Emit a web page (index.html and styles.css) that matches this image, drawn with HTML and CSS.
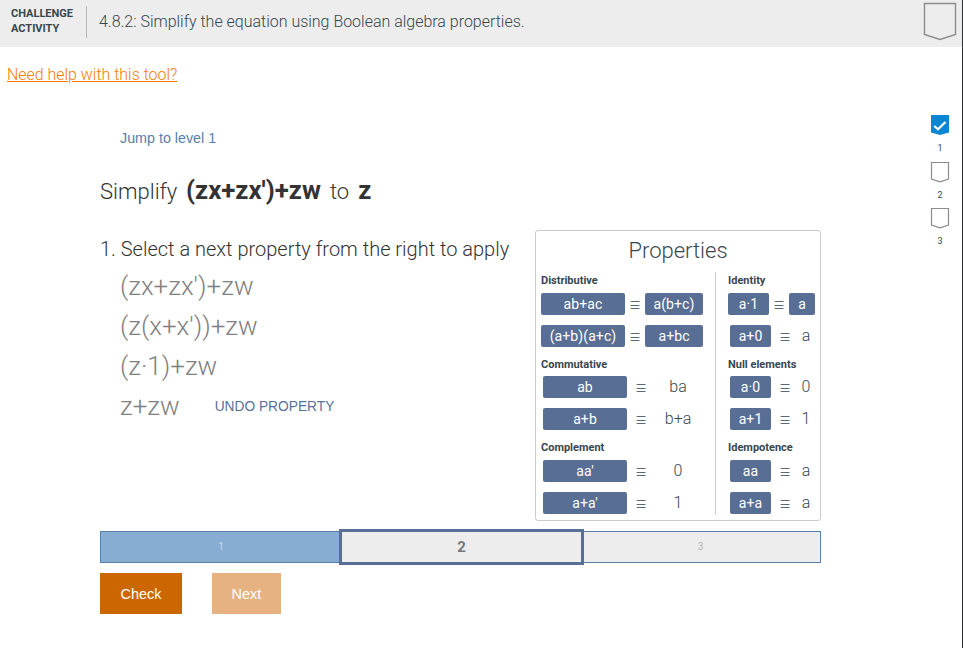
FILE: index.html
```html
<!DOCTYPE html>
<html lang="en">
<head>
    <meta charset="UTF-8">
    <meta name="viewport" content="width=device-width, initial-scale=1.0">
    <title>4.8.2: Simplify the equation using Boolean algebra properties</title>
    <link rel="stylesheet" href="styles.css">
</head>
<body>
    <div class="header">
        <div class="activity-type">CHALLENGE<br>ACTIVITY</div>
        <div class="activity-title">4.8.2: Simplify the equation using Boolean algebra properties.</div>
        <svg class="header-chevron" width="34" height="39" viewBox="0 0 34 39">
            <path d="M1.5 1.5H32.5V32.5L17 37.5L1.5 32.5Z" fill="none" stroke="#8c8c8c" stroke-width="1.4"/>
        </svg>
    </div>

    <div class="content">
        <div class="tool">
            <a href="#" class="help-link">Need help with this tool?</a>
            <div class="main">
                <button class="jump-button">Jump to level 1</button>
                <div class="prompt">
                    <span class="prompt-verb">Simplify</span>
                    <span class="prompt-expr">(zx+zx')+zw</span>
                    <span class="prompt-to">to</span>
                    <span class="prompt-expr">z</span>
                </div>

                <div class="work">
                    <div class="steps">
                        <div class="instruction">1. Select a next property from the right to apply</div>
                        <div class="step">(zx+zx')+zw</div>
                        <div class="step">(z(x+x'))+zw</div>
                        <div class="step">(z·1)+zw</div>
                        <div class="step">z+zw <button class="undo-button">UNDO PROPERTY</button></div>
                    </div>

                    <div class="properties">
                        <h2>Properties</h2>
                        <div class="columns">
                            <div class="column left">
                                <div class="group">
                                    <h3>Distributive</h3>
                                    <div class="row two-way"><button>ab+ac</button><i>≡</i><button>a(b+c)</button></div>
                                    <div class="row two-way"><button>(a+b)(a+c)</button><i>≡</i><button>a+bc</button></div>
                                </div>
                                <div class="group">
                                    <h3>Commutative</h3>
                                    <div class="row"><button>ab</button><i>≡</i><span>ba</span></div>
                                    <div class="row"><button>a+b</button><i>≡</i><span>b+a</span></div>
                                </div>
                                <div class="group">
                                    <h3>Complement</h3>
                                    <div class="row"><button>aa'</button><i>≡</i><span>0</span></div>
                                    <div class="row"><button>a+a'</button><i>≡</i><span>1</span></div>
                                </div>
                            </div>
                            <div class="column right">
                                <div class="group">
                                    <h3>Identity</h3>
                                    <div class="row two-way"><button>a·1</button><i>≡</i><button>a</button></div>
                                    <div class="row"><button>a+0</button><i>≡</i><span>a</span></div>
                                </div>
                                <div class="group">
                                    <h3>Null elements</h3>
                                    <div class="row"><button>a·0</button><i>≡</i><span>0</span></div>
                                    <div class="row"><button>a+1</button><i>≡</i><span>1</span></div>
                                </div>
                                <div class="group">
                                    <h3>Idempotence</h3>
                                    <div class="row"><button>aa</button><i>≡</i><span>a</span></div>
                                    <div class="row"><button>a+a</button><i>≡</i><span>a</span></div>
                                </div>
                            </div>
                        </div>
                    </div>
                </div>

                <div class="progress">
                    <div class="level done">1</div>
                    <div class="level current">2</div>
                    <div class="level">3</div>
                </div>
                <div class="actions">
                    <button class="check-button">Check</button>
                    <button class="next-button" disabled>Next</button>
                </div>
            </div>
        </div>

        <div class="chevrons">
            <div class="chevron">
                <svg width="20" height="22" viewBox="0 0 20 22">
                    <path d="M1 1H19V18.5L10 21L1 18.5Z" fill="#0b86d2"/>
                    <path d="M4.2 12L8 15.3L15.5 8" fill="none" stroke="#fff" stroke-width="2.2"/>
                </svg>
                <span>1</span>
            </div>
            <div class="chevron">
                <svg width="20" height="22" viewBox="0 0 20 22">
                    <path d="M1.5 1.5H18.5V18L10 20.8L1.5 18Z" fill="#fff" stroke="#8c8c8c" stroke-width="1.2"/>
                </svg>
                <span>2</span>
            </div>
            <div class="chevron">
                <svg width="20" height="22" viewBox="0 0 20 22">
                    <path d="M1.5 1.5H18.5V18L10 20.8L1.5 18Z" fill="#fff" stroke="#8c8c8c" stroke-width="1.2"/>
                </svg>
                <span>3</span>
            </div>
        </div>
    </div>
</body>
</html>
```
FILE: styles.css
```css
* {
    box-sizing: border-box;
}
body {
    margin: 0;
    height: 648px;
    overflow: hidden;
    background: #fff;
    border-right: 1px solid #2b2d30;
    font-family: Roboto, "Liberation Sans", sans-serif;
    font-weight: 300;
    color: #37474f;
}
button {
    border: none;
    padding: 0;
    font-family: inherit;
    cursor: pointer;
}
.header {
    display: flex;
    height: 47px;
    background: #ededed;
}
.activity-type {
    width: 86px;
    padding: 6px 0 0 11px;
    font-size: 11px;
    font-weight: 700;
    line-height: 15px;
}
.activity-title {
    flex: 1;
    height: 32px;
    margin-top: 6px;
    padding-left: 12px;
    border-left: 1px solid #b5b5b5;
    font-size: 15.97px;
    line-height: 32px;
}
.header-chevron {
    margin: 2px 5px 0 0;
}
.content {
    display: flex;
    justify-content: space-between;
}
.help-link {
    display: block;
    width: max-content;
    margin: 18px 0 0 7px;
    font-size: 15.95px;
    line-height: 20px;
    color: #f57c00;
}
.main {
    width: 721px;
    margin-left: 100px;
}
.jump-button {
    display: block;
    margin: 43px 0 0 20px;
    background: none;
    font-family: "Liberation Sans", Arial, sans-serif;
    font-size: 14.3px;
    line-height: 20px;
    color: #5780ab;
}
.prompt {
    display: flex;
    align-items: baseline;
    margin-top: 25px;
    font-size: 22px;
    line-height: 35px;
    color: #333;
}
.prompt-verb {
    width: 86px;
}
.prompt-expr {
    font-size: 25.8px;
    font-weight: 700;
}
.prompt-to {
    margin: 0 9px;
}
.work {
    display: flex;
    justify-content: space-between;
    margin-top: 21px;
}
.instruction {
    height: 36px;
    font-size: 20px;
    line-height: 39px;
    color: #333;
}
.step {
    display: flex;
    align-items: center;
    height: 40px;
    padding-left: 20px;
    font-size: 26px;
    color: #808080;
}
.undo-button {
    margin-left: 35px;
    background: none;
    font-family: "Liberation Sans", Arial, sans-serif;
    font-size: 13.75px;
    color: #58709a;
}
.properties {
    width: 286px;
    height: 291px;
    border: 1px solid #ccc;
    border-radius: 3px;
}
.properties h2 {
    height: 41px;
    margin: 0;
    font-size: 22px;
    font-weight: 300;
    line-height: 40px;
    text-align: center;
}
.columns {
    display: flex;
    height: 243px;
}
.column.left {
    width: 180px;
    padding-left: 5px;
    border-right: 1px solid #ccc;
}
.column.right {
    padding-left: 12px;
}
.group {
    height: 83.5px;
}
.group h3 {
    height: 20.5px;
    margin: 0;
    font-size: 11px;
    font-weight: 700;
    line-height: 18px;
}
.row {
    display: flex;
    height: 22px;
    margin: 0 0 10px 2px;
    font-size: 16px;
    line-height: 22px;
    text-align: center;
}
.row.two-way {
    margin-left: 0;
}
.row button {
    width: 84px;
    background: #586e94;
    border-radius: 2px;
    font-size: 14px;
    line-height: 22px;
    letter-spacing: 0.1px;
    color: #fff;
}
.row i {
    width: 28px;
    font-family: "Noto Sans CJK SC", sans-serif;
    font-size: 12px;
    font-style: normal;
    line-height: 21px;
    transform: scaleY(1.3);
}
.row span {
    width: 46px;
}
.two-way i {
    width: 20px;
}
.two-way button:last-child {
    width: 58px;
}
.right .row button {
    width: 41px;
}
.right .row span {
    width: 14px;
}
.right .two-way button:last-child {
    width: 26px;
}
.progress {
    display: flex;
    align-items: center;
    height: 36px;
    margin-top: 8px;
}
.level {
    width: 239px;
    height: 32px;
    background: #ededed;
    border: 1px solid #5780ab;
    font-size: 10px;
    font-weight: 400;
    line-height: 30px;
    text-align: center;
    color: #b3b3b3;
}
.level.done {
    background: #87add3;
    border-right: none;
    padding-left: 2px;
    color: #c9dcee;
}
.level.current {
    width: 245px;
    height: 36px;
    border: 3px solid #586e94;
    font-size: 15px;
    font-weight: 700;
    line-height: 30px;
    color: #777;
}
.level:last-child {
    width: 237px;
    padding-right: 3px;
    border-left: none;
}
.actions {
    display: flex;
    gap: 30px;
    margin-top: 8px;
}
.actions button {
    width: 82px;
    height: 41px;
    background: #cc6600;
    font-family: "Liberation Sans", Arial, sans-serif;
    font-size: 14.5px;
    color: #fff;
}
.actions .next-button {
    width: 69px;
    background: #e6b281;
}
.chevrons {
    width: 20px;
    margin: 67px 12px 0 0;
}
.chevron {
    height: 46.5px;
    font-size: 9px;
    font-weight: 400;
    text-align: center;
}
.chevron svg {
    display: block;
}
.chevron span {
    display: block;
    line-height: 24px;
}
```
